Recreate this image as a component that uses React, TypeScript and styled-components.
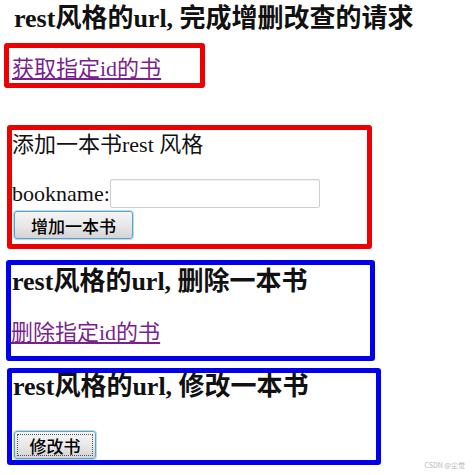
import styled, { createGlobalStyle } from 'styled-components';

const GlobalStyle = createGlobalStyle`
  html, body {
    margin: 0;
    padding: 0;
    background: #ffffff;
  }
  body {
    font-family: 'Liberation Serif', 'Noto Sans CJK SC', serif;
    color: #111111;
  }
`;

const Page = styled.div`
  position: relative;
  display: flex;
  flex-direction: column;
  align-items: flex-start;

  width: 474px;
  height: 475px;
  padding-left: 4px;
  box-sizing: border-box;
  overflow: hidden;
`;

const Title = styled.h2`
  margin: 0;
  padding-left: 10px;

  height: 38px;
  line-height: 38px;
  font-size: 26px;
  font-weight: bold;
  white-space: nowrap;
`;

const Box = styled.div<{ $color: string; $width: number; $height: number; $top: number; $left: number; $pad?: number }>`
  display: flex;
  flex-direction: column;
  align-items: flex-start;

  width: ${(p) => p.$width}px;
  height: ${(p) => p.$height}px;
  margin-top: ${(p) => p.$top}px;
  margin-left: ${(p) => p.$left}px;
  padding: 0 0 0 ${(p) => p.$pad ?? 0}px;
  box-sizing: border-box;

  border: 5px solid ${(p) => p.$color};
  border-radius: 3px;
`;

const Heading = styled.div<{ $top: number }>`
  margin-top: ${(p) => p.$top}px;
  margin-left: 1px;

  line-height: 26px;
  font-size: 26px;
  font-weight: bold;
  white-space: nowrap;
`;

const Text = styled.div<{ $top: number }>`
  margin-top: ${(p) => p.$top}px;

  line-height: 26px;
  font-size: 22px;
  white-space: nowrap;
`;

const Link = styled.a<{ $top: number }>`
  display: block;
  margin-top: ${(p) => p.$top}px;

  line-height: 26px;
  font-size: 22px;
  color: #7a1f8e;
  text-decoration: underline;
  text-underline-offset: 2px;
  white-space: nowrap;
`;

const Row = styled.div<{ $top: number }>`
  display: flex;
  align-items: center;
  margin-top: ${(p) => p.$top}px;

  font-size: 22px;
  white-space: nowrap;
`;

const Input = styled.input`
  width: 210px;
  height: 29px;
  margin-left: 0;
  box-sizing: border-box;

  border: 1px solid #cfcfcf;
  border-radius: 2px;
  box-shadow: inset 0 1px 1px rgba(0, 0, 0, 0.06);
  background: #ffffff;
`;

const Button = styled.button<{ $top: number; $width: number; $dotted?: boolean }>`
  margin-top: ${(p) => p.$top}px;
  margin-left: 2px;

  width: ${(p) => p.$width}px;
  height: 28px;
  padding: 0;

  font-family: 'Noto Sans CJK SC', sans-serif;
  font-size: 17px;
  font-weight: 500;
  line-height: 1;
  color: #000000;

  border: 1px solid #5fa0c8;
  border-radius: 3px;
  background: linear-gradient(#f4f4f4 0%, #e9e9e9 50%, #d4d4d4 100%);
  box-shadow: 0 0 0 1px #b9dcf0;
  outline: ${(p) => (p.$dotted ? '1px dotted #555' : 'none')};
  outline-offset: -4px;
`;

const Watermark = styled.span`
  position: absolute;
  right: 9px;
  bottom: 5px;

  font-family: 'Noto Sans CJK SC', sans-serif;
  font-size: 7px;
  color: #b5b5b5;
`;

const App = () => {
  return (
    <>
      <GlobalStyle />
      <Page>
        <Title>rest风格的url, 完成增删改查的请求</Title>

        <Box $color='#ee0000' $width={201} $height={45} $top={5} $left={0} $pad={3}>
          <Link href='#' $top={8}>获取指定id的书</Link>
        </Box>

        <Box $color='#ee0000' $width={365} $height={124} $top={37} $left={3}>
          <Text $top={2}>添加一本书rest 风格</Text>
          <Row $top={21}>
            bookname:<Input type='text' />
          </Row>
          <Button $top={3} $width={119}>增加一本书</Button>
        </Box>

        <Box $color='#0000ee' $width={369} $height={101} $top={11} $left={2}>
          <Heading $top={4}>rest风格的url, 删除一本书</Heading>
          <Link href='#' $top={25}>删除指定id的书</Link>
        </Box>

        <Box $color='#0000ee' $width={374} $height={97} $top={7} $left={3}>
          <Heading $top={1}>rest风格的url, 修改一本书</Heading>
          <Button $top={31} $width={82} $dotted>修改书</Button>
        </Box>

        <Watermark>CSDN @尘觉</Watermark>
      </Page>
    </>
  );
};

export default App;
